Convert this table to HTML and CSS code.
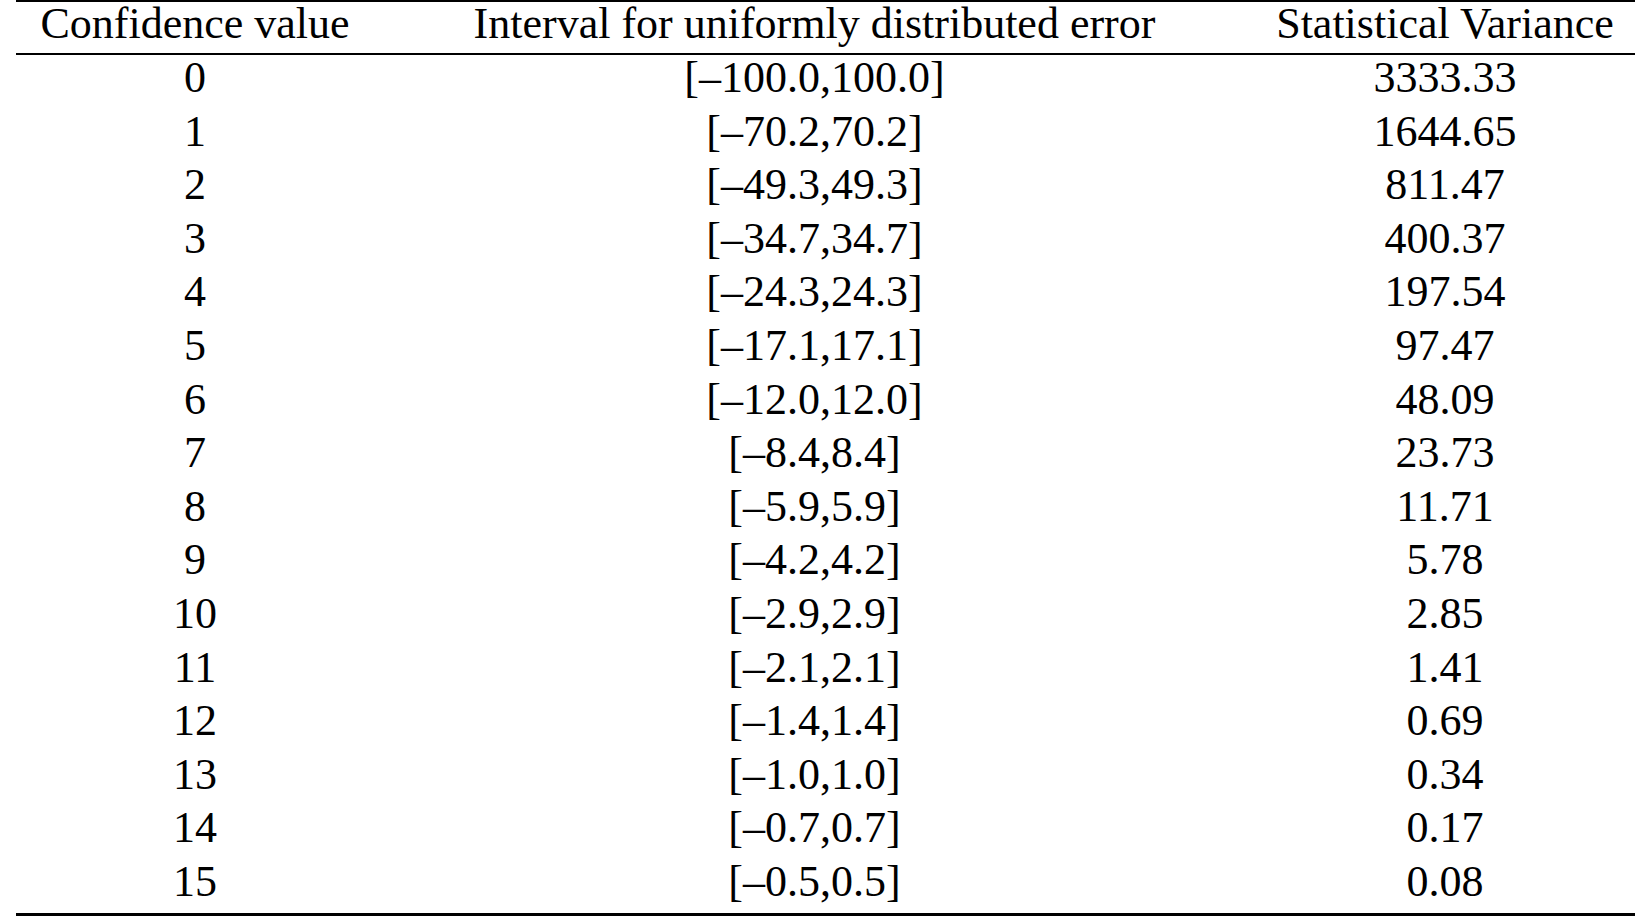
FILE: index.html
```html
<!DOCTYPE html>
<html>
<head>
<meta charset="utf-8">
<link rel="stylesheet" href="styles.css">
</head>
<body>
<table class="tbl">
<thead>
<tr><th class="c1">Confidence value</th><th class="c2">Interval for uniformly distributed error</th><th class="c3">Statistical Variance</th></tr>
</thead>
<tbody>
<tr><td>0</td><td>[–100.0,100.0]</td><td>3333.33</td></tr>
<tr><td>1</td><td>[–70.2,70.2]</td><td>1644.65</td></tr>
<tr><td>2</td><td>[–49.3,49.3]</td><td>811.47</td></tr>
<tr><td>3</td><td>[–34.7,34.7]</td><td>400.37</td></tr>
<tr><td>4</td><td>[–24.3,24.3]</td><td>197.54</td></tr>
<tr><td>5</td><td>[–17.1,17.1]</td><td>97.47</td></tr>
<tr><td>6</td><td>[–12.0,12.0]</td><td>48.09</td></tr>
<tr><td>7</td><td>[–8.4,8.4]</td><td>23.73</td></tr>
<tr><td>8</td><td>[–5.9,5.9]</td><td>11.71</td></tr>
<tr><td>9</td><td>[–4.2,4.2]</td><td>5.78</td></tr>
<tr><td>10</td><td>[–2.9,2.9]</td><td>2.85</td></tr>
<tr><td>11</td><td>[–2.1,2.1]</td><td>1.41</td></tr>
<tr><td>12</td><td>[–1.4,1.4]</td><td>0.69</td></tr>
<tr><td>13</td><td>[–1.0,1.0]</td><td>0.34</td></tr>
<tr><td>14</td><td>[–0.7,0.7]</td><td>0.17</td></tr>
<tr><td>15</td><td>[–0.5,0.5]</td><td>0.08</td></tr>
</tbody>
</table>
</body>
</html>
```
FILE: styles.css
```css
html, body {
  margin: 0;
  padding: 0;
  background: #ffffff;
}
body {
  padding-left: 16px;
  font-family: "Liberation Serif", "Times New Roman", serif;
  color: #000;
}
.tbl {
  border-collapse: collapse;
  border-top: 2px solid #000;
  border-bottom: 3px solid #000;
  table-layout: fixed;
  width: 1619px;
  font-size: 44px;
}
.tbl th, .tbl td {
  padding: 0;
  text-align: center;
  font-weight: normal;
  white-space: nowrap;
}
.tbl thead tr {
  border-bottom: 2px solid #000;
}
.tbl th {
  height: 43px;
  line-height: 43px;
  padding-bottom: 8px;
}
.tbl td {
  height: 46.6px;
  line-height: 46.6px;
  padding-bottom: 7px;
}
.c1 { width: 358px; }
.c2 { width: 881px; }
.c3 { width: 380px; }
```
